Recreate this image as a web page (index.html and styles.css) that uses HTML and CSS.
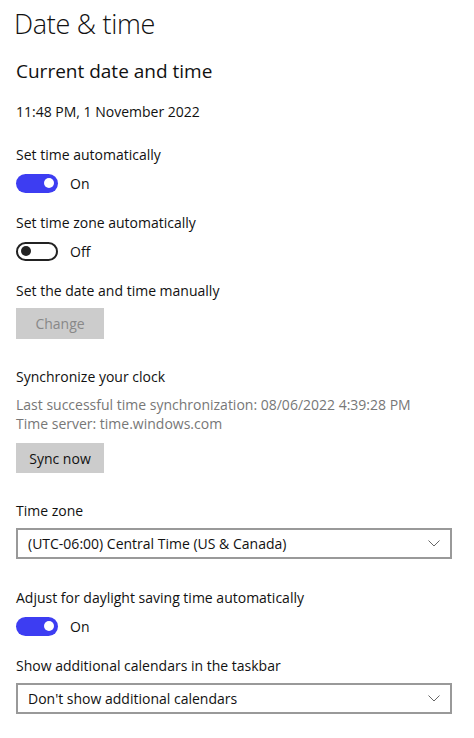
FILE: index.html
```html
<!DOCTYPE html>
<html>
<head>
<meta charset="utf-8">
<link rel="stylesheet" href="styles.css">
</head>
<body>
<div class="page">
  <h1 class="title">Date &amp; time</h1>
  <h2 class="subtitle">Current date and time</h2>
  <p class="now">11:48 PM, 1 November 2022</p>

  <div class="setting first">
    <div class="label">Set time automatically</div>
    <div class="toggle-row"><span class="toggle on"><span class="knob"></span></span><span class="state">On</span></div>
  </div>

  <div class="setting">
    <div class="label">Set time zone automatically</div>
    <div class="toggle-row"><span class="toggle off"><span class="knob"></span></span><span class="state">Off</span></div>
  </div>

  <div class="setting">
    <div class="label">Set the date and time manually</div>
    <button class="btn disabled">Change</button>
  </div>

  <div class="setting sync">
    <div class="label">Synchronize your clock</div>
    <div class="muted">Last successful time synchronization: 08/06/2022 4:39:28 PM</div>
    <div class="muted">Time server: time.windows.com</div>
    <button class="btn">Sync now</button>
  </div>

  <div class="setting tz">
    <div class="label">Time zone</div>
    <div class="select"><span>(UTC-06:00) Central Time (US &amp; Canada)</span>
      <svg class="chev" width="12" height="7" viewBox="0 0 12 7"><path d="M0.5 0.5 L6 6 L11.5 0.5" fill="none" stroke="#666" stroke-width="1"/></svg>
    </div>
  </div>

  <div class="setting dst">
    <div class="label">Adjust for daylight saving time automatically</div>
    <div class="toggle-row"><span class="toggle on"><span class="knob"></span></span><span class="state">On</span></div>
  </div>

  <div class="setting">
    <div class="label">Show additional calendars in the taskbar</div>
    <div class="select"><span>Don't show additional calendars</span>
      <svg class="chev" width="12" height="7" viewBox="0 0 12 7"><path d="M0.5 0.5 L6 6 L11.5 0.5" fill="none" stroke="#666" stroke-width="1"/></svg>
    </div>
  </div>
</div>
</body>
</html>
```

FILE: styles.css
```css
html, body {
  margin: 0;
  padding: 0;
  background: #fff;
}
body {
  font-family: "Open Sans", "Noto Sans", sans-serif;
  color: #111;
}
.page {
  padding: 0 22px 0 16px;
}
.title {
  font-size: 27px;
  font-weight: 300;
  margin: 0;
  padding-top: 6px;
  line-height: 36px;
  margin-left: -2px;
  letter-spacing: -0.3px;
}
.subtitle {
  font-size: 19px;
  font-weight: 400;
  margin: 16px 0 0 0;
  line-height: 26px;
}
.now {
  font-size: 14px;
  margin: 18px 0 0 0;
  line-height: 20px;
}
.setting {
  margin-top: 20px;
}
.setting.first {
  margin-top: 23px;
}
.label {
  font-size: 14px;
  line-height: 20px;
}
.toggle-row {
  display: flex;
  align-items: center;
  gap: 12px;
  margin-top: 8px;
  height: 20px;
}
.toggle {
  width: 42px;
  height: 19px;
  border-radius: 10px;
  box-sizing: border-box;
  display: flex;
  align-items: center;
  padding: 0 4px;
}
.toggle.on {
  background: #3d3df2;
  justify-content: flex-end;
}
.toggle.off {
  border: 2px solid #222;
  justify-content: flex-start;
  padding: 0 3px;
}
.knob {
  width: 10px;
  height: 10px;
  border-radius: 50%;
}
.toggle.on .knob { background: #fff; }
.toggle.off .knob { background: #222; }
.state {
  font-size: 14px;
}
.btn {
  display: block;
  margin-top: 7px;
  width: 88px;
  height: 31px;
  border: none;
  background: #cccccc;
  font-family: inherit;
  font-size: 14px;
  color: #111;
  padding: 0;
}
.btn.disabled {
  color: #888;
}
.sync {
  margin-top: 28px;
}
.muted {
  font-size: 14px;
  line-height: 19px;
  color: #777;
}
.sync .label {
  margin-bottom: 8px;
}
.sync .btn {
  margin-top: 10px;
  height: 30px;
}
.tz {
  margin-top: 28px;
}
.select {
  margin-top: 7px;
  height: 31px;
  border: 2px solid #999;
  box-sizing: border-box;
  display: flex;
  align-items: center;
  justify-content: space-between;
  padding: 0 10px 0 10px;
  font-size: 14px;
}
.dst {
  margin-top: 29px;
}
```
